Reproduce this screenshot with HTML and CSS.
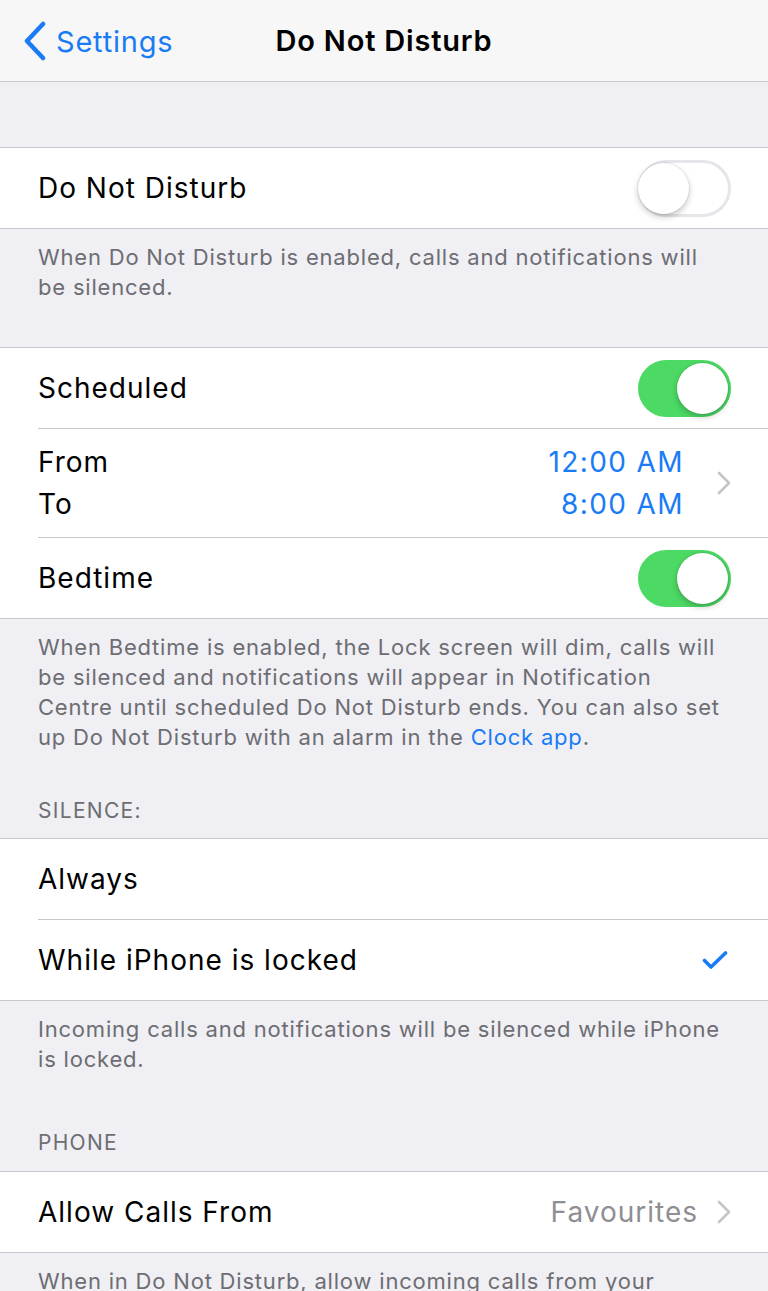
FILE: index.html
```html
<!DOCTYPE html>
<html lang="en">
<head>
<meta charset="UTF-8">
<title>Do Not Disturb</title>
<link rel="stylesheet" href="styles.css">
</head>
<body>
<header class="nav">
  <a class="back" href="#">
    <svg class="back-icon" viewBox="0 0 24 40" width="24" height="40"><path d="M20 3 L4 20 L20 37" fill="none" stroke="#1a7cf5" stroke-width="4.5" stroke-linecap="round" stroke-linejoin="round"/></svg>
    <span>Settings</span>
  </a>
  <h1 class="title">Do Not Disturb</h1>
</header>

<main class="list">
  <section class="group first">
    <div class="row">
      <span class="label">Do Not Disturb</span>
      <span class="switch"><span class="knob"></span></span>
    </div>
  </section>
  <p class="footer">When Do Not Disturb is enabled, calls and notifications will be silenced.</p>

  <section class="group g2">
    <div class="row">
      <span class="label">Scheduled</span>
      <span class="switch on"><span class="knob"></span></span>
    </div>
    <div class="row tall">
      <span class="label stack"><span>From</span><span>To</span></span>
      <span class="value stack times"><span>12:00 AM</span><span>8:00 AM</span></span>
      <svg class="chev" viewBox="0 0 14 24" width="14" height="24"><path d="M2 2 L12 12 L2 22" fill="none" stroke="#c4c4c9" stroke-width="2.6" stroke-linecap="round" stroke-linejoin="round"/></svg>
    </div>
    <div class="row">
      <span class="label">Bedtime</span>
      <span class="switch on"><span class="knob"></span></span>
    </div>
  </section>
  <p class="footer">When Bedtime is enabled, the Lock screen will dim, calls will be silenced and notifications will appear in Notification Centre until scheduled Do Not Disturb ends. You can also set up Do Not Disturb with an alarm in the <a href="#">Clock app</a>.</p>

  <h2 class="header h-silence">SILENCE:</h2>
  <section class="group">
    <div class="row">
      <span class="label">Always</span>
    </div>
    <div class="row">
      <span class="label">While iPhone is locked</span>
      <svg class="check" viewBox="0 0 26 20" width="26" height="20"><path d="M2.5 10.5 L9 17 L23.5 3" fill="none" stroke="#1a7cf5" stroke-width="3.6" stroke-linecap="round" stroke-linejoin="round"/></svg>
    </div>
  </section>
  <p class="footer">Incoming calls and notifications will be silenced while iPhone is locked.</p>

  <h2 class="header h-phone">PHONE</h2>
  <section class="group">
    <div class="row">
      <span class="label">Allow Calls From</span>
      <span class="value gray">Favourites</span>
      <svg class="chev" viewBox="0 0 14 24" width="14" height="24"><path d="M2 2 L12 12 L2 22" fill="none" stroke="#c4c4c9" stroke-width="2.6" stroke-linecap="round" stroke-linejoin="round"/></svg>
    </div>
  </section>
  <p class="footer">When in Do Not Disturb, allow incoming calls from your Favourites.</p>
</main>
</body>
</html>
```

FILE: styles.css
```css
body{margin:0;background:#efeff4;font-family:Inter,"Noto Sans",Arial,sans-serif;color:#000;height:1291px;overflow:hidden}

/* barra superior */
.nav{height:81px;background:#f7f7f7;border-bottom:1px solid #c8c7cc;display:flex;align-items:center;justify-content:center;position:relative}
.back{position:absolute;left:23px;top:21px;display:flex;align-items:center;gap:9px;color:#1a7cf5;text-decoration:none;font-size:29px;letter-spacing:.8px}
.back-icon{display:block}
.title{margin:0;font-size:29px;font-weight:600;letter-spacing:.8px}

.list{padding-top:65px}
.group{background:#fff;border-top:1px solid #c8c7cc;border-bottom:1px solid #c8c7cc}
.row{display:flex;align-items:center;height:80px;margin-left:38px;padding-right:38px;border-top:1px solid #c8c7cc}
.row:first-child{border-top:none}
.row.tall{height:108px}
.label{font-size:28px;flex:1;letter-spacing:1px}
.stack{display:flex;flex-direction:column;gap:7px;line-height:35px}
.value{font-size:28px;letter-spacing:1px}
.times{color:#1a7cf5;align-items:flex-end;margin-right:33px;letter-spacing:1.4px}
.gray{color:#8e8e93;margin-right:19px}
.chev{display:block;margin-right:-1px}
.check{display:block;margin-right:2px}

/* interruptor */
.switch{width:93px;height:57px;border-radius:29px;box-sizing:border-box;border:3px solid #e5e5ea;background:#fff;position:relative;margin-right:-1px}
.switch .knob{position:absolute;left:-3px;top:0;width:51px;height:51px;border-radius:50%;background:#fff;box-shadow:0 3px 6px rgba(0,0,0,.22),0 0 0 1px rgba(0,0,0,.06)}
.switch.on{background:#4cd964;border-color:#4cd964}
.switch.on .knob{left:36px}

.footer{margin:0;padding:13px 38px 0;font-size:22px;line-height:30px;color:#6d6d72;letter-spacing:.8px}
.footer a{color:#1a7cf5;text-decoration:none}
.first + .footer{padding-bottom:45px}
.header{margin:0;padding:0 38px;font-size:21px;font-weight:400;color:#6d6d72;line-height:28px;letter-spacing:1.3px}
.h-silence{margin-top:45px;margin-bottom:13px}
.h-phone{margin-top:55px;margin-bottom:14px}
```
